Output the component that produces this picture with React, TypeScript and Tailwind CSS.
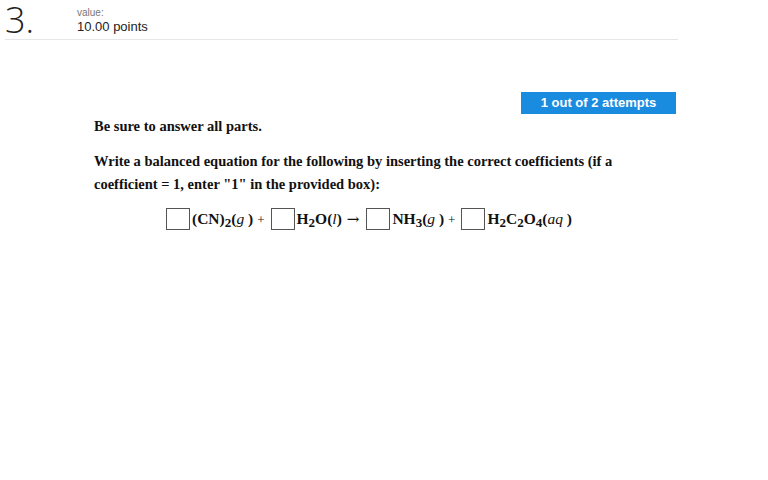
export default function App() {
  const serif = { fontFamily: '"Liberation Serif", "Times New Roman", serif' }
  const Box = () => (
    <span className="inline-block w-[24px] h-[22px] border border-[#555] bg-white align-middle mx-[2px]" />
  )
  const Sub = ({ children }: { children: React.ReactNode }) => (
    <span className="text-[13px] relative top-[3px]">{children}</span>
  )
  return (
    <div className="w-[768px] h-[480px] bg-white font-['Liberation_Sans',Arial,sans-serif]">
      <div className="w-[673px] ml-[5px] border-b border-[#e6e6e6] h-[40px] flex">
        <div className="w-[72px] pt-[4px]">
          <div className="text-[36px] leading-[32px] font-light text-[#222] font-['Open_Sans',sans-serif]">3.</div>
        </div>
        <div className="pt-[7px]">
          <div className="text-[10px] leading-[12px] text-[#777]">value:</div>
          <div className="text-[13px] leading-[16px] text-[#222]">10.00 points</div>
        </div>
      </div>

      <div className="w-[676px] flex justify-end mt-[52px]">
        <div className="w-[155px] h-[22px] bg-[#1a8ce0] text-white text-[13px] font-bold flex items-center justify-center">
          1 out of 2 attempts
        </div>
      </div>

      <div className="ml-[94px] w-[560px] text-[14.5px] font-bold text-[#111]" style={serif}>
        <p className="mt-[3px] leading-[18px]">Be sure to answer all parts.</p>
        <p className="mt-[15px] leading-[23px]">
          Write a balanced equation for the following by inserting the correct coefficients (if a
          <br />
          coefficient = 1, enter "1" in the provided box):
        </p>
        <div className="mt-[12px] ml-[70px] flex items-center text-[15.5px] leading-none whitespace-nowrap">
          <Box />
          <span>(CN)<Sub>2</Sub>(<i className="font-normal">g</i>&nbsp;)</span>
          <span className="font-normal text-[13px] mx-[4px]">+</span>
          <Box />
          <span>H<Sub>2</Sub>O(<i className="font-normal">l</i>)</span>
          <span className="font-normal text-[15px] mx-[5px] font-['DejaVu_Serif',serif]">→</span>
          <Box />
          <span>NH<Sub>3</Sub>(<i className="font-normal">g</i>&nbsp;)</span>
          <span className="font-normal text-[13px] mx-[4px]">+</span>
          <Box />
          <span>H<Sub>2</Sub>C<Sub>2</Sub>O<Sub>4</Sub>(<i className="font-normal">aq</i>&nbsp;)</span>
        </div>
      </div>
    </div>
  )
}
